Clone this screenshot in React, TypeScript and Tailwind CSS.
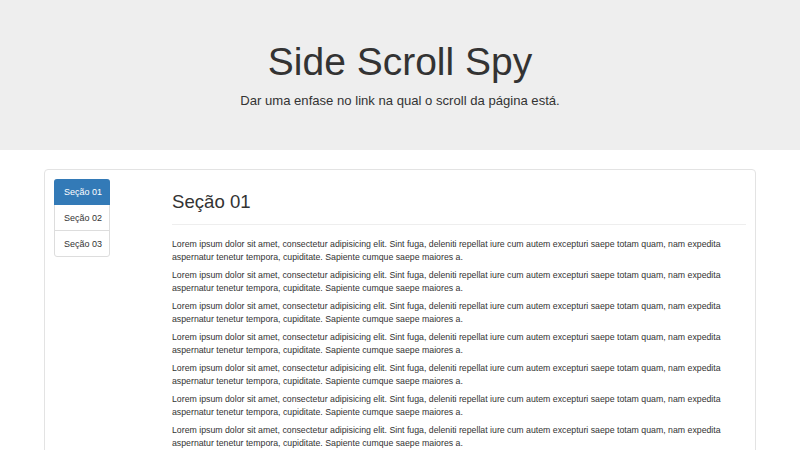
export default function App() {
  const text =
    "Lorem ipsum dolor sit amet, consectetur adipisicing elit. Sint fuga, deleniti repellat iure cum autem excepturi saepe totam quam, nam expedita aspernatur tenetur tempora, cupiditate. Sapiente cumque saepe maiores a.";
  return (
    <div className="w-[800px] h-[450px] overflow-hidden bg-white text-[#333]" style={{ fontFamily: '"Liberation Sans", Arial, sans-serif' }}>
      <div className="h-[150px] bg-[#eeeeee] flex flex-col items-center pt-[38px]">
        <h1 className="text-[39px] leading-[48px] font-normal">Side Scroll Spy</h1>
        <p className="text-[13.1px] leading-[20px] mt-[5px]">Dar uma enfase no link na qual o scroll da página está.</p>
      </div>
      <div className="pt-[19px] px-[44px]">
        <div className="border border-[#e3e3e3] rounded-[4px] h-[300px] flex pt-[9px] pl-[9px] pr-[9px]">
          <div className="w-[56px] shrink-0">
            <div className="border border-[#ddd] rounded-[3px] text-[9px] leading-[26px]">
              <div className="bg-[#337ab7] text-white pl-[10px] rounded-t-[3px] -m-px mb-0 h-[26px]">Seção 01</div>
              <div className="pl-[9px] border-b border-[#ddd] h-[26px]">Seção 02</div>
              <div className="pl-[9px] h-[25px]">Seção 03</div>
            </div>
          </div>
          <div className="ml-[62px] flex-1">
            <h2 className="text-[18.6px] leading-[24px] mt-[11px] font-normal">Seção 01</h2>
            <div className="border-t border-[#eee] mt-[10px] mb-[13px]" />
            {Array.from({ length: 8 }).map((_, i) => (
              <p key={i} className="text-[8.75px] leading-[13px] mb-[5px]">{text}</p>
            ))}
          </div>
        </div>
      </div>
    </div>
  );
}
